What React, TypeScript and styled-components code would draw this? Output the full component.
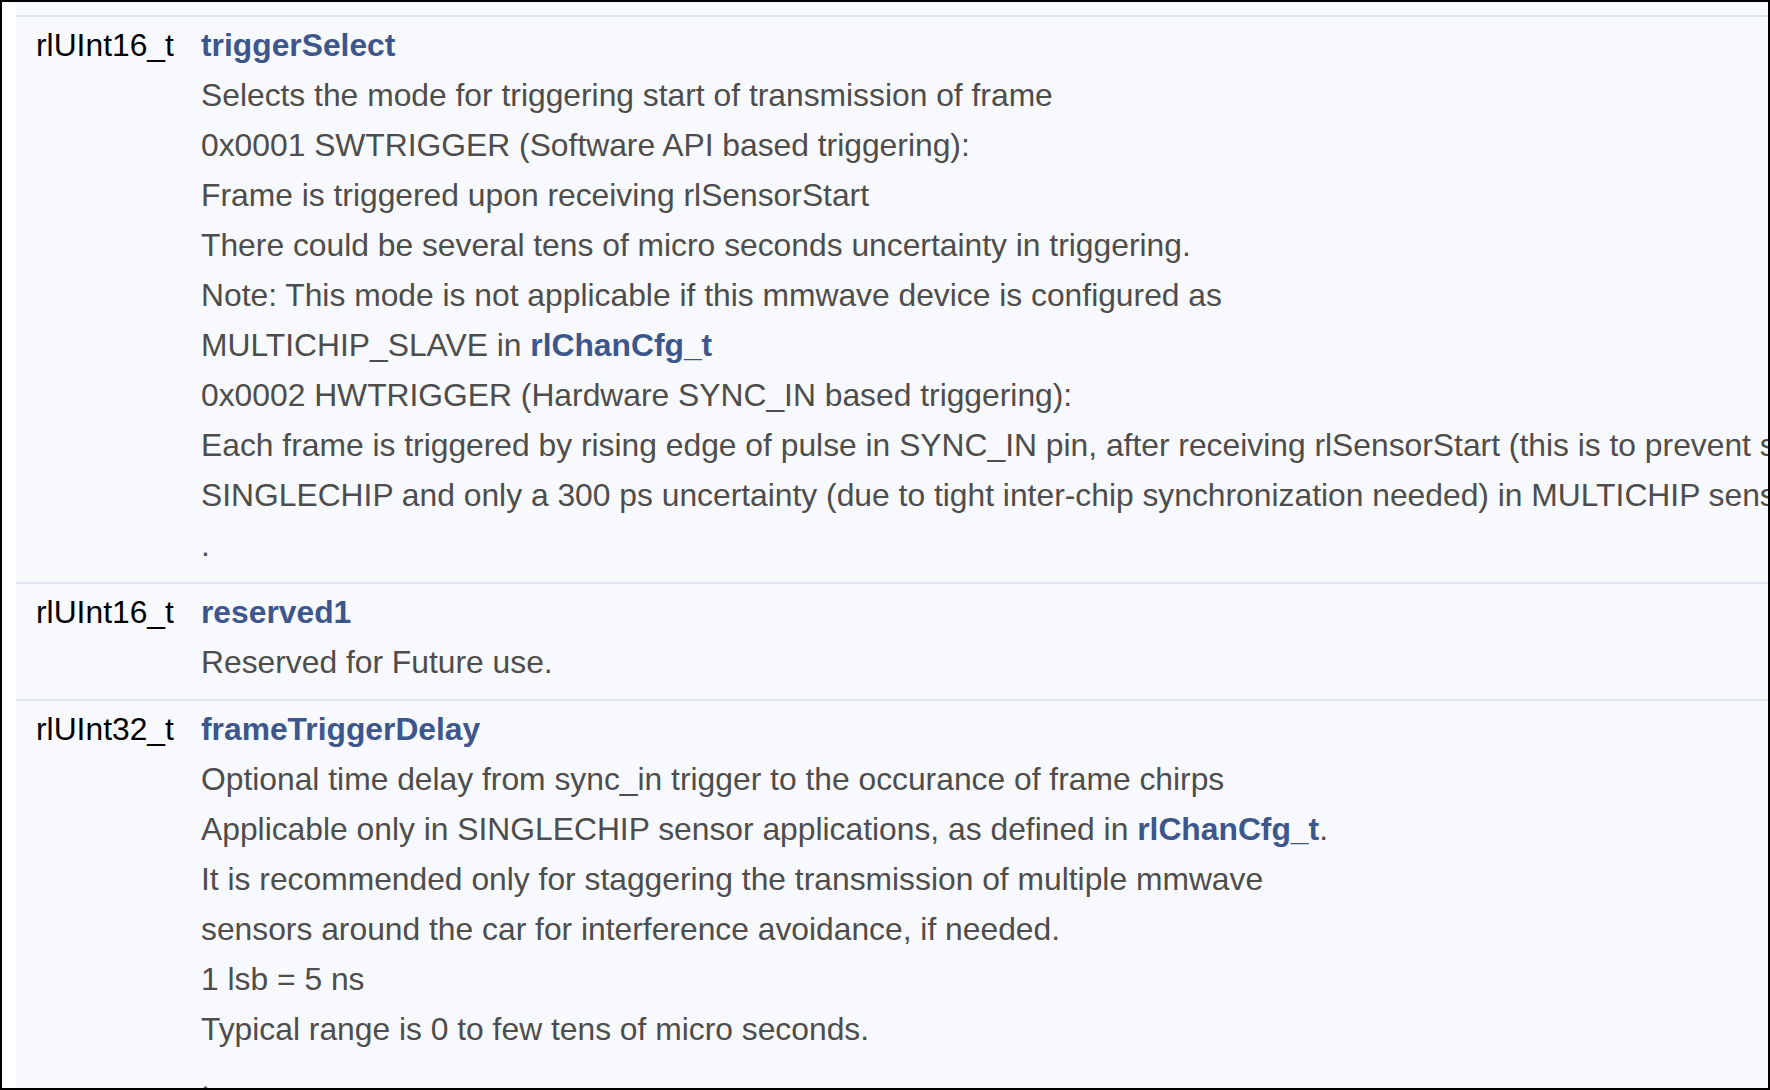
import React from "react";
import styled, { createGlobalStyle } from "styled-components";

const GlobalStyle = createGlobalStyle`
  html, body {
    margin: 0;
    padding: 0;
    background: #ffffff;
    overflow: hidden;
  }
  #root {
    width: 1770px;
    height: 1090px;
  }
`;

const Frame = styled.div`
  box-sizing: border-box;
  width: 1770px;
  height: 1090px;
  border: 2px solid #000000;
  background: #ffffff;
  padding-left: 14px;
  overflow: hidden;
`;

const FieldTable = styled.div`
  background: #f8f9fc;
  padding-top: 13px;
  min-height: 100%;
  font-family: "Liberation Sans", Arial, sans-serif;
  font-size: 31.8px;
  line-height: 50px;
`;

const Row = styled.div`
  display: grid;
  grid-template-columns: 185px 1fr;
  border-top: 2px solid #dee4f0;
  padding: 3px 0 12px;
`;

const TypeCell = styled.div`
  padding-left: 20px;
  color: #000000;
  white-space: nowrap;
`;

const FieldCell = styled.div`
  min-width: 0;
  white-space: nowrap;
`;

const FieldName = styled.div`
  color: #3d578c;
  font-weight: bold;
`;

const DocLine = styled.div`
  color: #4d4d4d;
`;

const Link = styled.a`
  color: #3d578c;
  font-weight: bold;
  text-decoration: none;
`;

type Field = {
  type: string;
  name: string;
  doc: React.ReactNode[];
};

const fields: Field[] = [
  {
    type: "rlUInt16_t",
    name: "triggerSelect",
    doc: [
      "Selects the mode for triggering start of transmission of frame",
      "0x0001 SWTRIGGER (Software API based triggering):",
      "Frame is triggered upon receiving rlSensorStart",
      "There could be several tens of micro seconds uncertainty in triggering.",
      "Note: This mode is not applicable if this mmwave device is configured as",
      <>
        MULTICHIP_SLAVE in <Link>rlChanCfg_t</Link>
      </>,
      "0x0002 HWTRIGGER (Hardware SYNC_IN based triggering):",
      "Each frame is triggered by rising edge of pulse in SYNC_IN pin, after receiving rlSensorStart (this is to prevent spurious triggers). There could be several tens of nano seconds uncertainty in",
      "SINGLECHIP and only a 300 ps uncertainty (due to tight inter-chip synchronization needed) in MULTICHIP sensor applications",
      ".",
    ],
  },
  {
    type: "rlUInt16_t",
    name: "reserved1",
    doc: ["Reserved for Future use."],
  },
  {
    type: "rlUInt32_t",
    name: "frameTriggerDelay",
    doc: [
      "Optional time delay from sync_in trigger to the occurance of frame chirps",
      <>
        Applicable only in SINGLECHIP sensor applications, as defined in <Link>rlChanCfg_t</Link>.
      </>,
      "It is recommended only for staggering the transmission of multiple mmwave",
      "sensors around the car for interference avoidance, if needed.",
      "1 lsb = 5 ns",
      "Typical range is 0 to few tens of micro seconds.",
      ".",
    ],
  },
];

export default function App() {
  return (
    <>
      <GlobalStyle />
      <Frame>
        <FieldTable>
          {fields.map((f) => (
            <Row key={f.name}>
              <TypeCell>{f.type}</TypeCell>
              <FieldCell>
                <FieldName>{f.name}</FieldName>
                {f.doc.map((d, i) => (
                  <DocLine key={i}>{d}</DocLine>
                ))}
              </FieldCell>
            </Row>
          ))}
        </FieldTable>
      </Frame>
    </>
  );
}
